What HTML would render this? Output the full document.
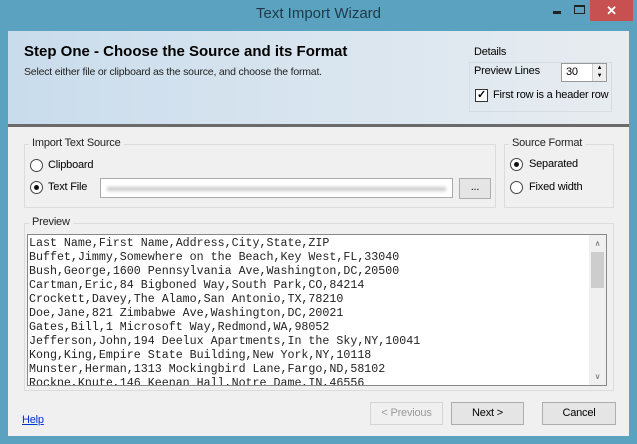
<!DOCTYPE html><html><head><style>
*{box-sizing:border-box;margin:0;padding:0}
body{width:637px;height:444px;background:#5aa2c0;font-family:"Liberation Sans",sans-serif;font-size:11px;letter-spacing:-0.2px;color:#000;position:relative;overflow:hidden}
.a{position:absolute}
.title{left:0;top:0;width:637px;height:31px;text-align:center;line-height:27px;font-size:15px;letter-spacing:0;color:#1e3a48}
.client{left:8px;top:31px;width:621px;height:405px;background:#f0f0f0}
.hdr{left:8px;top:31px;width:621px;height:94px;background:linear-gradient(90deg,#c9dcec 0%,#d9e5ef 50%,#e8ecf0 100%)}
.grp{border:1px solid #dcdcdc;position:absolute}
.lg{position:absolute;background:#f0f0f0;padding:0 3px;top:-8px;left:4px;color:#222}
.radio{position:absolute;width:13px;height:13px;border:1px solid #444;border-radius:50%;background:#fff}
.radio.on::after{content:"";position:absolute;left:3px;top:3px;width:5px;height:5px;border-radius:50%;background:#111}
.btn{position:absolute;border:1px solid #adadad;background:#e5e5e5;text-align:center;line-height:21px}
pre{font-family:"Liberation Mono",monospace;font-size:11.65px;letter-spacing:0;line-height:14px;color:#222}
</style></head><body>
<div class="a title">Text Import Wizard</div>
<div class="a" style="left:553px;top:11px;width:8px;height:3px;background:#222"></div>
<div class="a" style="left:574px;top:5px;width:11px;height:9px;border:1px solid #222;border-top-width:2px"></div>
<div class="a" style="left:590px;top:0;width:43px;height:21px;background:#c75050;color:#fff;text-align:center;line-height:21px;font-size:13px;font-weight:bold">✕</div>
<div class="a client"></div>
<div class="a hdr"></div>
<div class="a" style="left:8px;top:124px;width:621px;height:3px;background:#6a6a6a"></div>
<div class="a" style="left:24px;top:43px;font-size:15px;font-weight:bold;letter-spacing:0">Step One - Choose the Source and its Format</div>
<div class="a" style="left:24px;top:66px;font-size:10.5px;color:#222">Select either file or clipboard as the source, and choose the format.</div>
<div class="a" style="left:469px;top:62px;width:143px;height:50px;border:1px solid #d5dde4"></div>
<div class="a" style="left:474px;top:46px">Details</div>
<div class="a" style="left:474px;top:65px">Preview Lines</div>
<div class="a" style="left:561px;top:63px;width:46px;height:19px;border:1px solid #999;background:#fff;padding-left:4px;line-height:17px">30</div>
<div class="a" style="left:592px;top:64px;width:14px;height:17px;border-left:1px solid #ccc;background:#eee;font-size:6px;text-align:center;line-height:8px">▲<br>▼</div>
<div class="a" style="left:475px;top:89px;width:13px;height:13px;border:1px solid #333;background:#fff;font-size:11px;line-height:11px;text-align:center;font-weight:bold">✓</div>
<div class="a" style="left:493px;top:89px">First row is a header row</div>

<div class="grp" style="left:24px;top:144px;width:472px;height:64px"><span class="lg">Import Text Source</span></div>
<div class="radio" style="left:30px;top:159px"></div><div class="a" style="left:48px;top:159px">Clipboard</div>
<div class="radio on" style="left:30px;top:181px"></div><div class="a" style="left:48px;top:181px">Text File</div>
<div class="a" style="left:100px;top:178px;width:353px;height:20px;border:1px solid #aaa;background:#fff"><div style="margin:8px 6px;height:4px;background:#c8c8c8;filter:blur(1.5px)"></div></div>
<div class="btn" style="left:459px;top:178px;width:32px;height:21px;line-height:17px">...</div>
<div class="grp" style="left:504px;top:144px;width:110px;height:64px"><span class="lg">Source Format</span></div>
<div class="radio on" style="left:510px;top:158px"></div><div class="a" style="left:529px;top:158px">Separated</div>
<div class="radio" style="left:510px;top:181px"></div><div class="a" style="left:529px;top:181px">Fixed width</div>

<div class="grp" style="left:24px;top:223px;width:590px;height:168px"><span class="lg">Preview</span></div>
<div class="a" style="left:27px;top:234px;width:580px;height:152px;border:1px solid #888;background:#fff;overflow:hidden">
<pre style="padding:2px 0 0 1px">Last Name,First Name,Address,City,State,ZIP
Buffet,Jimmy,Somewhere on the Beach,Key West,FL,33040
Bush,George,1600 Pennsylvania Ave,Washington,DC,20500
Cartman,Eric,84 Bigboned Way,South Park,CO,84214
Crockett,Davey,The Alamo,San Antonio,TX,78210
Doe,Jane,821 Zimbabwe Ave,Washington,DC,20021
Gates,Bill,1 Microsoft Way,Redmond,WA,98052
Jefferson,John,194 Deelux Apartments,In the Sky,NY,10041
Kong,King,Empire State Building,New York,NY,10118
Munster,Herman,1313 Mockingbird Lane,Fargo,ND,58102
Rockne,Knute,146 Keenan Hall,Notre Dame,IN,46556</pre>
<div class="a" style="right:0;top:0;width:17px;height:150px;background:#f0f0f0;font-size:8px;text-align:center;color:#666">
<div style="height:17px;line-height:17px">∧</div>
<div style="margin:0 2px;height:36px;background:#cdcdcd"></div>
<div class="a" style="bottom:0;left:0;width:17px;height:17px;line-height:17px">∨</div></div>
</div>

<div class="a" style="left:22px;top:414px;color:#0033cc;text-decoration:underline">Help</div>
<div class="btn" style="left:370px;top:402px;width:73px;height:23px;color:#999;border-color:#d5d5d5;background:#f0f0f0">&lt; Previous</div>
<div class="btn" style="left:451px;top:402px;width:73px;height:23px">Next &gt;</div>
<div class="btn" style="left:542px;top:402px;width:74px;height:23px">Cancel</div>
</body></html>
